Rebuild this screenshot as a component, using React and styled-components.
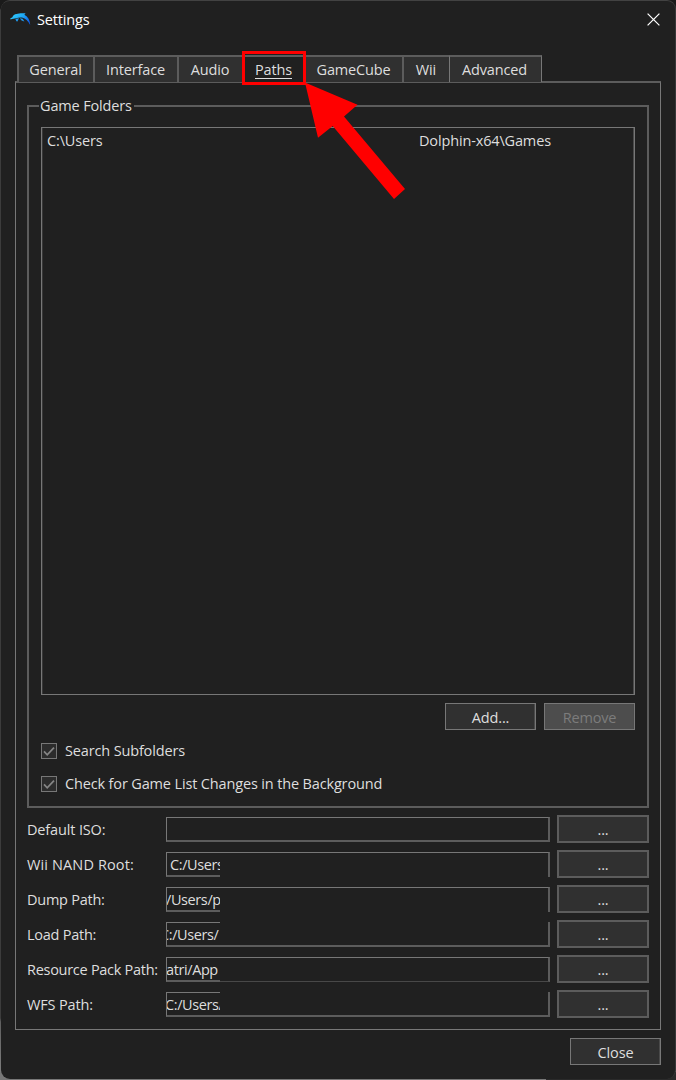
import React, { useState } from 'react';
import styled, { createGlobalStyle } from 'styled-components';

const tabs = [
  { name: 'General', width: 76 },
  { name: 'Interface', width: 84 },
  { name: 'Audio', width: 65 },
  { name: 'Paths', width: 62 },
  { name: 'GameCube', width: 98 },
  { name: 'Wii', width: 47 },
  { name: 'Advanced', width: 93 },
];

const paths = [
  { label: 'Default ISO:', value: '', indent: 0, spacing: -0.15, top: '1px solid #777', bottom: '2px solid #5c5c5c' },
  { label: 'Wii NAND Root:', value: 'C:/Users', indent: 3, spacing: 0.13, top: '1px solid #777', bottom: 'none' },
  { label: 'Dump Path:', value: '/Users/p', indent: -1, spacing: -0.25, top: '1px solid #777', bottom: 'none' },
  { label: 'Load Path:', value: 'C:/Users/', indent: -7, spacing: -0.25, top: 'none', bottom: '2px solid #5c5c5c' },
  { label: 'Resource Pack Path:', value: 'atri/App', indent: -1, spacing: -0.28, top: '1px solid #777', bottom: '1px solid #484848' },
  { label: 'WFS Path:', value: 'C:/Users/', indent: -2, spacing: -0.15, top: 'none', bottom: '2px solid #5c5c5c' },
];

export default function App() {
  const [active, setActive] = useState('Paths');
  const [subfolders, setSubfolders] = useState(true);
  const [background, setBackground] = useState(true);

  return (<Desktop>
    <GlobalStyle />
    <Window>
      <TitleBar>
        <DolphinLogo />
        <Title>Settings</Title>
        <CloseIcon />
      </TitleBar>
      <Tabs>
        {tabs.map((v) => (
          <Tab key={v.name} $width={v.width} $active={v.name === active} onClick={() => { setActive(v.name) }}>
            <span>{v.name}</span>
            {v.name === 'Paths' && <Highlight />}
          </Tab>
        ))}
      </Tabs>
      <Panel>
        <Group>
          <Legend>Game Folders</Legend>
          <List>
            <Folder $width={372}>C:\Users</Folder>
            <Folder>Dolphin-x64\Games</Folder>
          </List>
          <Actions>
            <Button>Add...</Button>
            <Button disabled>Remove</Button>
          </Actions>
          <Checks>
            <Check checked={subfolders} onChange={setSubfolders}>Search Subfolders</Check>
            <Check checked={background} onChange={setBackground}>Check for Game List Changes in the Background</Check>
          </Checks>
        </Group>
        <PathList>
          {paths.map((v) => (
            <PathRow key={v.label}>
              <Label $spacing={v.spacing}>{v.label}</Label>
              <Field>
                <FieldText $indent={v.indent}>{v.value}</FieldText>
                <FieldRest $top={v.top} $bottom={v.bottom} />
              </Field>
              <BrowseButton>...</BrowseButton>
            </PathRow>
          ))}
        </PathList>
      </Panel>
      <Footer>
        <Button>Close</Button>
      </Footer>
    </Window>
    <Arrow viewBox="0 0 104 120">
      <path d="M1 0.5L53.5 22.7L40 34.5L101 107L90 117L28.7 44L14 55.7Z" fill="#ff0000" />
    </Arrow>
  </Desktop>);
}

const Check = (props) => (
  <CheckLabel>
    <HiddenInput type="checkbox" checked={props.checked} onChange={(e) => { props.onChange(e.target.checked) }} />
    <Box>
      {props.checked && <svg width="14" height="14" viewBox="0 0 14 14">
        <path d="M2 7.4L5.2 10.8L12 3.6" fill="none" stroke="#858585" strokeWidth="1.7" />
      </svg>}
    </Box>
    {props.children}
  </CheckLabel>
);

const DolphinLogo = () => (
  <svg width="21" height="13" viewBox="0 0 21 13">
    <defs>
      <linearGradient id="dolphin" x1="0" y1="0" x2="1" y2="0.6">
        <stop offset="0" stopColor="#35d2ff" />
        <stop offset="0.55" stopColor="#1eaaf5" />
        <stop offset="1" stopColor="#1060e8" />
      </linearGradient>
    </defs>
    <path
      d="M0.2 5.6L2.4 4.2C3 2.4 4.4 1.2 6.6 1C8.4 0.2 12 0 15.6 0.3L14.4 1.8C18 3.6 20 7.4 20.2 12C18.2 8 15.4 5.4 12 4.6C9.8 4.2 8 4.6 6.2 5.2C4.4 5.6 2.4 5.6 0.6 6.4Z"
      fill="url(#dolphin)"
    />
    <path d="M5.4 6L9 5.2L7.4 8.4L6.4 8.2ZM9.8 5.2L12.6 5.8L14.4 8.4L11.6 7.4Z" fill="#1e9cf0" />
  </svg>
);

const CloseIcon = () => (
  <svg width="13" height="13" viewBox="0 0 13 13">
    <path d="M0.6 0.6L12.4 12.4M12.4 0.6L0.6 12.4" stroke="#fff" strokeWidth="1.25" />
  </svg>
);

const GlobalStyle = createGlobalStyle`
  * {
    box-sizing: border-box;
  }
  body {
    margin: 0;
    background: #161616;
  }
`;

const Desktop = styled.div`
  position: relative;
  width: 676px;
  height: 1080px;
  padding-left: 1px;
  overflow: hidden;
  background:
    linear-gradient(90deg, #777 546px, #2a2a2a 546px) bottom / 100% 8px no-repeat,
    linear-gradient(#1a1a1a 8px, #3c3c3c 10px, #3c3c3c 1018px, #606060 1022px, #808080);
  font-family: 'Open Sans', 'Noto Sans', sans-serif;
  font-size: 14.5px;
  letter-spacing: -0.15px;
  line-height: 20px;
  color: #dedede;
`;

const Window = styled.div`
  width: 675px;
  height: 1079px;
  padding: 0 14px;
  border-top: 1px solid #424242;
  border-right: 1px solid #383838;
  border-radius: 9px;
  background: #202020;
`;

const TitleBar = styled.div`
  display: flex;
  align-items: center;
  height: 37px;
  margin: 0 1px 0 -5px;
`;

const Title = styled.div`
  flex: 1;
  padding-left: 6px;
  color: #fff;
`;

const Tabs = styled.div`
  display: flex;
  height: 27px;
  margin: 17px 0 0 2px;
`;

const Tab = styled.div`
  position: relative;
  display: flex;
  justify-content: center;
  width: ${(props) => props.$width}px;
  padding: 3px 1px 0 0;
  border-top: 2px solid #5c5c5c;
  border-left: 2px solid #5c5c5c;
  background: ${(props) => (props.$active ? '#202020' : '#303030')};
  span {
    height: 19px;
    border-bottom: ${(props) => (props.$active ? '1px solid #dedede' : 'none')};
  }
  &:last-child {
    padding-right: 2px;
    border-left: 1px solid #777;
    border-right: 1px solid #777;
  }
`;

const Highlight = styled.div`
  position: absolute;
  z-index: 1;
  top: -6px;
  left: -2px;
  width: 64px;
  height: 34px;
  border: 3px solid #ff0000;
`;

const Panel = styled.div`
  width: 646px;
  height: 949px;
  padding: 22px 11px 0;
  border: 1px solid #777;
  border-top: 2px solid #5c5c5c;
  margin-top: -1px;
`;

const Group = styled.div`
  width: 622px;
  height: 703px;
  padding: 0 12px;
  border: 2px solid #5c5c5c;
`;

const Legend = styled.div`
  width: 95px;
  height: 20px;
  margin: -11px 0 0 -2px;
  padding-left: 1px;
  background: #202020;
`;

const List = styled.div`
  display: flex;
  width: 594px;
  height: 568px;
  margin-top: 11px;
  padding: 3px 5px;
  border: 1px solid #777;
  box-shadow: inset 1px 0 #383838, inset -1px 0 #4a4a4a;
`;

const Folder = styled.div`
  width: ${(props) => (props.$width ? props.$width + 'px' : 'auto')};
`;

const Actions = styled.div`
  display: flex;
  justify-content: flex-end;
  gap: 8px;
  margin-top: 8px;
`;

const Button = styled.button`
  width: 91px;
  height: 27px;
  padding: 2px 0 0;
  border: 1px solid #777;
  box-shadow: inset -1px 0 #4a4a4a;
  background: #303030;
  color: #dedede;
  font: inherit;
  letter-spacing: inherit;
  &:disabled {
    background: #4d4d4d;
    color: #7c7c7c;
  }
`;

const BrowseButton = styled(Button)`
  width: 92px;
  height: 28px;
  border: 2px solid #5c5c5c;
  box-shadow: none;
`;

const Checks = styled.div`
  display: flex;
  flex-direction: column;
  gap: 13px;
  margin-top: 11px;
`;

const CheckLabel = styled.label`
  display: flex;
  align-items: center;
  height: 20px;
`;

const HiddenInput = styled.input`
  display: none;
`;

const Box = styled.span`
  display: flex;
  width: 16px;
  height: 16px;
  margin-right: 8px;
  border: 1px solid #777;
  background: #2c2c2c;
`;

const PathList = styled.div`
  display: flex;
  flex-direction: column;
  gap: 7px;
  margin-top: 7px;
`;

const PathRow = styled.div`
  display: flex;
  align-items: center;
  height: 28px;
`;

const Label = styled.div`
  width: 139px;
  padding-top: 2px;
  letter-spacing: ${(props) => props.$spacing}px;
  white-space: nowrap;
`;

const Field = styled.div`
  display: flex;
  width: 384px;
  height: 25px;
  margin-right: 7px;
`;

const FieldText = styled.div`
  width: 54px;
  overflow: hidden;
  border: 1px solid #777;
  border-right: none;
  border-bottom: 2px solid #5c5c5c;
  white-space: nowrap;
  text-indent: ${(props) => props.$indent}px;
  letter-spacing: -0.4px;
  line-height: 23px;
`;

const FieldRest = styled.div`
  flex: 1;
  border-top: ${(props) => props.$top};
  border-bottom: ${(props) => props.$bottom};
  border-right: 2px solid #5c5c5c;
`;

const Footer = styled.div`
  display: flex;
  justify-content: flex-end;
  margin-top: 8px;
`;

const Arrow = styled.svg`
  position: absolute;
  z-index: 2;
  top: 82px;
  left: 303.5px;
  width: 104px;
  height: 120px;
`;
